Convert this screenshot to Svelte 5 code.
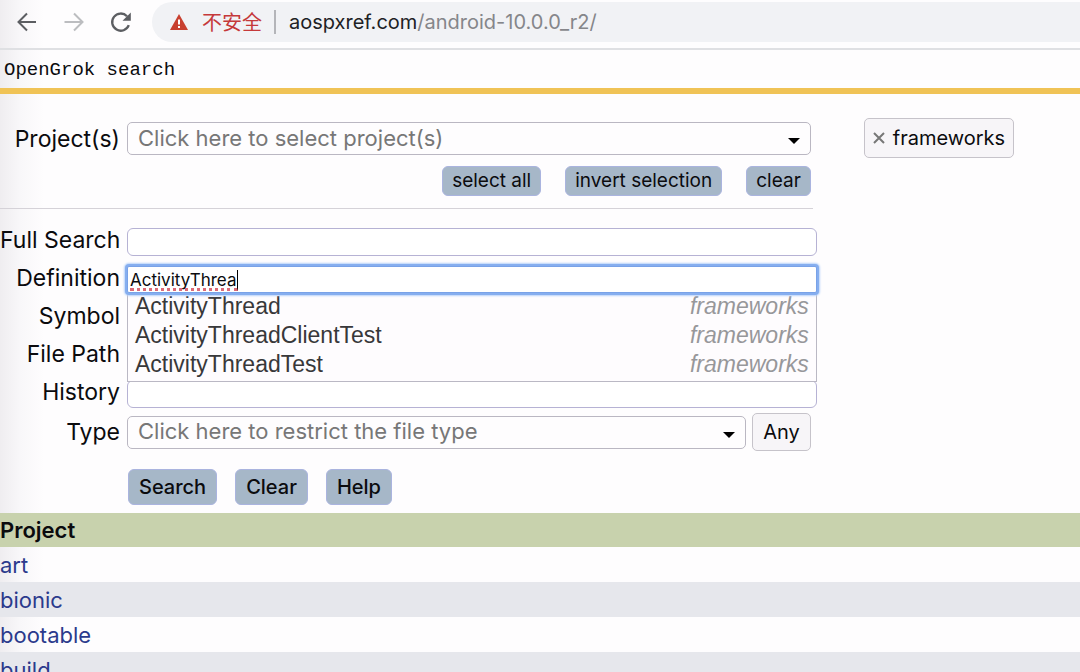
<script>
  const suggestions = ['ActivityThread', 'ActivityThreadClientTest', 'ActivityThreadTest'];
  const projects = ['art', 'bionic', 'bootable', 'build'];
  let full = $state('');
  let definition = $state('ActivityThrea');
  let symbol = $state('');
  let path = $state('');
  let history = $state('');
  let open = $state(true);

  function pick(name) {
    definition = name;
    open = false;
  }
</script>

<div class="page">
  <nav class="toolbar" aria-label="Browser">
    <button class="nav" aria-label="Back">
      <svg width="24" height="24" viewBox="0 0 24 24" fill="none" stroke="#5c5e62" stroke-width="2"><path d="M21 12H4M12 3.500L3.500 12l8.500 8.500" /></svg>
    </button>
    <button class="nav" aria-label="Forward">
      <svg width="24" height="24" viewBox="0 0 24 24" fill="none" stroke="#bcbdc0" stroke-width="2"><path d="M2.500 12H20M12 3.500l8.500 8.500-8.500 8.500" /></svg>
    </button>
    <button class="nav" aria-label="Reload">
      <svg width="24" height="24" viewBox="0 0 24 24"><path d="M19.800 15.200A8.600 8.600 0 1 1 18 6.200" fill="none" stroke="#5c5e62" stroke-width="2.300" /><path d="M21.800 2.500v8.300h-8.300z" fill="#5c5e62" /></svg>
    </button>
    <div class="omnibox">
      <svg width="18" height="16" viewBox="0 0 18 16"><path d="M9 0l9 16H0z" fill="#c8402f" /><path d="M8 5.500h2v5H8zM8 12h2v2H8z" fill="#fff" /></svg>
      <span class="insecure">不安全</span>
      <span class="bar"></span>
      <span class="url">aospxref.com<span class="rest">/android-10.0.0_r2/</span></span>
    </div>
  </nav>

  <header>OpenGrok search</header>

  <main>
    <form onsubmit={(e) => e.preventDefault()}>
      <div class="row project-row">
        <label for="project">Project(s)</label>
        <select id="project"><option>Click here to select project(s)</option></select>
      </div>
      <div class="picks">
        <button type="button">select all</button>
        <button type="button">invert selection</button>
        <button type="button">clear</button>
      </div>
      <hr />
      <div class="fields">
        <div class="row"><label for="full">Full Search</label><input id="full" type="text" bind:value={full} /></div>
        <div class="row">
          <label for="defs">Definition</label>
          <div class="combo">
            <input id="defs" class="active" type="text" autocomplete="off" spellcheck="false" bind:value={definition} />
            {#if open}
              <span class="caret"></span>
              <ul>
                {#each suggestions as name}
                  <li><button type="button" onclick={() => pick(name)}><span>{name}</span><em>frameworks</em></button></li>
                {/each}
              </ul>
            {/if}
          </div>
        </div>
        <div class="row"><label for="symbol">Symbol</label><input id="symbol" type="text" bind:value={symbol} /></div>
        <div class="row"><label for="path">File Path</label><input id="path" type="text" bind:value={path} /></div>
        <div class="row"><label for="hist">History</label><input id="hist" type="text" bind:value={history} /></div>
      </div>
      <div class="row type-row">
        <label for="type">Type</label>
        <div class="type">
          <select id="type"><option>Click here to restrict the file type</option></select>
          <button type="button" class="tag">Any</button>
        </div>
      </div>
      <div class="actions">
        <button type="submit">Search</button>
        <button type="button">Clear</button>
        <button type="button">Help</button>
      </div>
    </form>
    <aside>
      <button type="button" class="tag chosen">
        <svg width="12" height="12" viewBox="0 0 12 12" stroke="#777" stroke-width="2"><path d="M1 1l10 10M11 1L1 11" /></svg>
        frameworks
      </button>
    </aside>
  </main>

  <table>
    <thead><tr><th>Project</th></tr></thead>
    <tbody>
      {#each projects as name}
        <tr><td><a href="#{name}">{name}</a></td></tr>
      {/each}
    </tbody>
  </table>
</div>

<style>
  :global(body) {
    margin: 0;
    background: #fefdfe;
  }
  :global(html) {
    scrollbar-width: none;
  }
  .page {
    font: 22px/28px Inter, 'Liberation Sans', sans-serif;
    color: #0b0b0e;
    background: linear-gradient(90deg, #efedf0 0, #f8f7f9 20px, #fefdfe 44px);
  }
  button, input, select {
    font: inherit;
    color: inherit;
    box-sizing: border-box;
    margin: 0;
  }
  .toolbar {
    display: flex;
    align-items: center;
    height: 50px;
    padding: 0 0 4px 15px;
    box-sizing: border-box;
    border-bottom: 2px solid #dfe0e3;
  }
  .nav {
    display: flex;
    border: 0;
    padding: 0;
    background: none;
    margin-right: 23px;
  }
  .nav:nth-of-type(3) {
    margin-right: 19px;
  }
  .omnibox {
    flex: 1;
    display: flex;
    align-items: center;
    height: 40px;
    padding-left: 18px;
    border-radius: 20px 0 0 20px;
    background: #f1f2f5;
    font-size: 20px;
    white-space: nowrap;
  }
  .insecure {
    margin-left: 14px;
    color: #c5393a;
    font-family: 'Noto Sans CJK SC', sans-serif;
  }
  .bar {
    width: 2px;
    height: 24px;
    margin: 0 13px 0 12px;
    background: #b4b5b9;
  }
  .url {
    color: #202124;
  }
  .rest {
    color: #85868a;
  }
  header {
    padding: 6px 4px 4px;
    border-bottom: 6px solid #f0c356;
    font: 19px/28px 'Liberation Mono', monospace;
  }
  main {
    display: flex;
    align-items: flex-start;
  }
  form {
    width: 76%;
    padding: 28px 4px 8px 0;
    box-sizing: border-box;
  }
  .row {
    display: grid;
    grid-template-columns: 120px minmax(0, 1fr);
    column-gap: 7px;
    align-items: center;
  }
  label {
    text-align: right;
    white-space: nowrap;
    font-size: 23px;
  }
  .fields label {
    line-height: 24px;
    padding-bottom: 4px;
  }
  .project-row, .picks, .type {
    padding-right: 6px;
  }
  select {
    appearance: none;
    width: 100%;
    min-width: 0;
    height: 33px;
    padding: 0 32px 2px 10px;
    border: 1px solid #bab7c2;
    border-radius: 5px;
    color: #777;
    background: #fefdfe url("data:image/svg+xml,%3Csvg xmlns='http://www.w3.org/2000/svg' width='12' height='6'%3E%3Cpath d='M0 0h12L6 6z'/%3E%3C/svg%3E") no-repeat right 10px top 15px;
  }
  .picks {
    display: flex;
    justify-content: flex-end;
    gap: 24px;
    margin: 11px 0 12px;
  }
  .picks button, .actions button {
    padding: 0 9px;
    border: 1px solid #aab4df;
    border-radius: 6px;
    background: #a6b7c8;
    font-size: 19px;
    line-height: 28px;
    white-space: nowrap;
  }
  hr {
    margin: 0 4px 19px 0;
    border: 0;
    border-top: 1px solid #d5d2d8;
  }
  .fields {
    display: grid;
    gap: 10px;
  }
  input {
    display: block;
    width: 100%;
    height: 28px;
    padding: 0 2px;
    border: 1px solid #b6b2d4;
    border-radius: 6px;
    background: #fff;
    font-size: 17px;
    outline: none;
  }
  .combo {
    position: relative;
  }
  input.active {
    position: relative;
    z-index: 2;
    height: 27px;
    margin-bottom: 1px;
    border-color: #79a2e8;
    border-radius: 2px;
    box-shadow: 0 0 0 2px #86aeef, 0 0 2px 3px #b7d2fa;
  }
  .caret {
    position: absolute;
    z-index: 3;
    left: 3px;
    top: 4px;
    width: 107px;
    height: 18px;
    border-right: 1px solid #000;
    border-bottom: 3px dotted #dc6b78;
    pointer-events: none;
  }
  ul {
    position: absolute;
    z-index: 1;
    top: 26px;
    left: 0;
    right: 0;
    margin: 0;
    padding: 0 0 2px;
    list-style: none;
    border: 1px solid #bab8c4;
    border-top: 0;
    background: #fefcfe;
    font: 23px/29px 'Liberation Sans', Arial, sans-serif;
    color: #38383a;
  }
  li button {
    display: flex;
    justify-content: space-between;
    width: 100%;
    padding: 0 7px;
    border: 0;
    background: none;
    text-align: left;
  }
  em {
    color: #97979a;
  }
  .type-row {
    margin-top: 5px;
  }
  .type {
    display: flex;
    align-items: center;
    gap: 6px;
  }
  .type select {
    flex: 1;
  }
  .tag {
    height: 38px;
    padding: 0 10px;
    border: 1px solid #c6c3ca;
    border-radius: 5px;
    background: #f7f5f8;
    font-size: 20px;
    white-space: nowrap;
  }
  .actions {
    display: flex;
    gap: 18px;
    margin: 18px 0 0 128px;
  }
  .actions button {
    padding: 0 10px;
    font-size: 20px;
    line-height: 34px;
    font-weight: 500;
  }
  aside {
    padding: 24px 0 0 43px;
  }
  .chosen {
    display: flex;
    align-items: center;
    gap: 8px;
    height: 40px;
    padding: 0 8px;
  }
  table {
    width: 100%;
    border-collapse: collapse;
  }
  th, td {
    height: 35px;
    padding: 0;
    text-align: left;
  }
  th {
    height: 34px;
    background: #c8d2ad;
    font-weight: 600;
  }
  tbody tr:nth-child(even) {
    background: #e6e7ec;
  }
  a {
    color: #2b3a8c;
    text-decoration: none;
  }
</style>
